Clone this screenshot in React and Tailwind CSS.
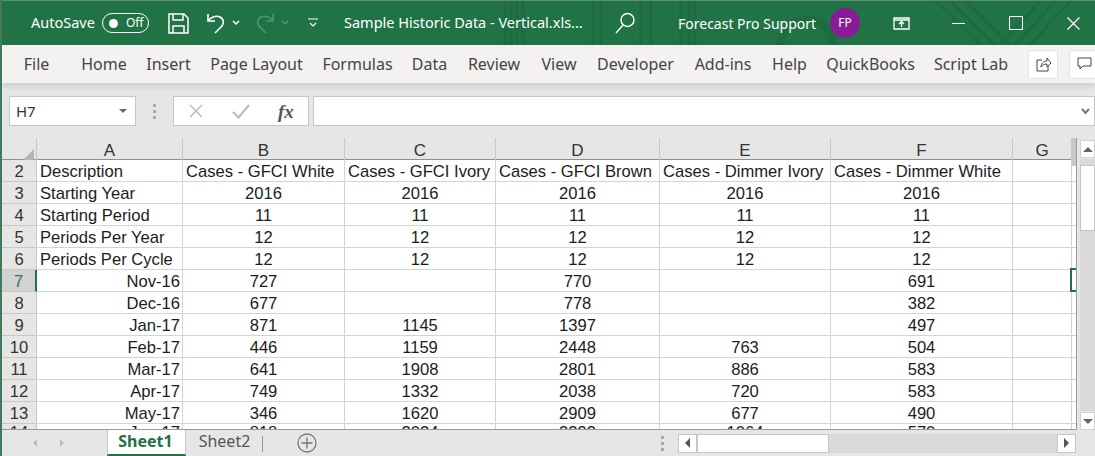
import React from "react";

// ---------- data ----------
const TABS = [
  ["File", "w-[69px]"],
  ["Home", "w-[66px]"],
  ["Insert", "w-[63px]"],
  ["Page Layout", "w-[113px]"],
  ["Formulas", "w-[89px]"],
  ["Data", "w-[55px]"],
  ["Review", "w-[74px]"],
  ["View", "w-[56px]"],
  ["Developer", "w-[97px]"],
  ["Add-ins", "w-[78px]"],
  ["Help", "w-[55px]"],
  ["QuickBooks", "w-[107px]"],
  ["Script Lab", "w-[94px]"],
];

const COLUMNS = ["A", "B", "C", "D", "E", "F", "G"];

const ROWS = [
  [2, "Description", "Cases - GFCI White", "Cases - GFCI Ivory", "Cases - GFCI Brown", "Cases - Dimmer Ivory", "Cases - Dimmer White"],
  [3, "Starting Year", "2016", "2016", "2016", "2016", "2016"],
  [4, "Starting Period", "11", "11", "11", "11", "11"],
  [5, "Periods Per Year", "12", "12", "12", "12", "12"],
  [6, "Periods Per Cycle", "12", "12", "12", "12", "12"],
  [7, "Nov-16", "727", "", "770", "", "691"],
  [8, "Dec-16", "677", "", "778", "", "382"],
  [9, "Jan-17", "871", "1145", "1397", "", "497"],
  [10, "Feb-17", "446", "1159", "2448", "763", "504"],
  [11, "Mar-17", "641", "1908", "2801", "886", "583"],
  [12, "Apr-17", "749", "1332", "2038", "720", "583"],
  [13, "May-17", "346", "1620", "2909", "677", "490"],
  [14, "Jun-17", "818", "2024", "3293", "1064", "570"],
];

const GRID = "grid grid-cols-[35px_146px_162px_151px_164px_171px_182px_59px_4px]";

// ---------- small svg icons ----------
const Stroke = ({ w, h, children, sw = 1.5, className = "" }) => (
  <svg width={w} height={h} viewBox={`0 0 ${w} ${h}`} fill="none" stroke="currentColor" strokeWidth={sw} className={`shrink-0 ${className}`}>
    {children}
  </svg>
);

const Chevron = ({ className = "" }) => (
  <Stroke w={8} h={6} className={className}>
    <path d="M1 1l3 3 3-3" />
  </Stroke>
);

const Grip = () => (
  <div className="flex flex-col justify-center gap-[3px]">
    <span className="w-[3px] h-[3px] bg-[#aaa]" />
    <span className="w-[3px] h-[3px] bg-[#aaa]" />
    <span className="w-[3px] h-[3px] bg-[#aaa]" />
  </div>
);

const TitleBackground = () => (
  <svg className="absolute inset-0 w-full h-full" viewBox="0 0 1095 45" preserveAspectRatio="none">
    <g fill="none" stroke="#1f6b41" strokeWidth="3">
      <path d="M504 0v45M510 0v45M516 0v45M522 0v45" />
      <path d="M592 0v45M600 0v45M640 0v45M650 0v45M680 0v45M688 0v45M694 0v45" />
      <path d="M780 45a26 26 0 0 1 52 0" strokeWidth="8" />
      <path d="M930 -5l50 50M945 -5l50 50M960 -5l50 50M1000 45l45 -50M1015 45l45 -50M1030 45l45 -50" />
    </g>
  </svg>
);

// ---------- sections ----------
const TitleBar = () => (
  <div className="relative shrink-0 h-[45px] bg-[#217346] border-t border-[#5d8f72] text-white overflow-hidden">
    <TitleBackground />
    <div className="relative flex items-center h-full pl-[29px] text-[14.5px]">
      <span className="w-[71px] shrink-0">AutoSave</span>
      <div className="w-[47px] h-[20px] shrink-0 rounded-full border border-white flex items-center pl-[6px] gap-[8px]">
        <span className="w-[9px] h-[9px] rounded-full bg-white" />
        <span className="text-[12px]">Off</span>
      </div>
      <Stroke w={21} h={21} className="ml-[19px]">
        <path d="M1 1h15l4 4v15H1zM5 1v6h10V1M5 20v-7h11v7" />
      </Stroke>
      <Stroke w={20} h={22} sw={1.6} className="ml-[17px]">
        <path d="M2 2v7h7M2 9c3-4 8-6 12-4 5 3 4 8 0 11l-5 5" />
      </Stroke>
      <Chevron className="ml-[6px]" />
      <Stroke w={20} h={22} sw={1.6} className="ml-[15px] text-[#4f9570]">
        <path d="M18 2v7h-7M18 9c-3-4-8-6-12-4-5 3-4 8 0 11l5 5" />
      </Stroke>
      <Chevron className="ml-[6px] text-[#4f9570]" />
      <Stroke w={10} h={10} sw={1.2} className="ml-[19px]">
        <path d="M0 1h10M2 5l3 3 3-3" />
      </Stroke>
      <span className="ml-[26px] w-[271px] shrink-0 whitespace-nowrap">Sample Historic Data - Vertical.xls...</span>
      <Stroke w={20} h={22} sw={1.4}>
        <circle cx="12.5" cy="8" r="6.5" />
        <path d="M8 13l-7 8" />
      </Stroke>
      <span className="ml-[43px] w-[152px] shrink-0 whitespace-nowrap text-[14px]">Forecast Pro Support</span>
      <div className="w-[30px] h-[30px] shrink-0 rounded-full bg-[#8a1a96] flex items-center justify-center text-[12px]">FP</div>
      <Stroke w={17} h={13} sw={1.3} className="ml-[33px]">
        <path d="M1 1h15v11H1zM1 3h15M8.5 10V5M6 7l2.5-2.5L11 7" />
      </Stroke>
      <div className="ml-[42px] w-[13px] h-px shrink-0 bg-white" />
      <div className="ml-[44px] w-[14px] h-[14px] shrink-0 border border-white" />
      <Stroke w={13} h={13} sw={1.2} className="ml-[44px]">
        <path d="M0.5 0.5l12 12M12.5 0.5l-12 12" />
      </Stroke>
    </div>
  </div>
);

const RibbonTabs = () => (
  <div className="relative z-10 shrink-0 flex items-center h-[38px] bg-[#f3f2f1] text-[16px] text-[#444] shadow-[0_3px_6px_rgba(0,0,0,0.12)] overflow-hidden">
    {TABS.map(([label, width]) => (
      <span key={label} className={`${width} shrink-0 text-center whitespace-nowrap`}>
        {label}
      </span>
    ))}
    <div className="ml-[10px] shrink-0 w-[30px] h-[29px] rounded-[2px] bg-white border border-[#e4e4e4] flex items-center justify-center text-[#444]">
      <Stroke w={15} h={15} sw={1}>
        <path d="M6 3H1v11h11V9M5 10c0-4 3-6 6-6V1l4 5-4 4V7c-3 0-5 1-6 3z" />
      </Stroke>
    </div>
    <div className="ml-[11px] shrink-0 w-[30px] h-[29px] rounded-[2px] bg-white border border-[#e4e4e4] flex items-center justify-center text-[#444]">
      <Stroke w={15} h={14} sw={1}>
        <path d="M1 1h13v8H6l-3 3V9H1z" />
      </Stroke>
    </div>
  </div>
);

const FormulaBar = () => (
  <div className="shrink-0 flex items-center h-[55px] bg-[#e6e6e6] pt-[1px] pl-[7px]">
    <div className="w-[127px] h-[30px] bg-white border border-[#c6c6c6] flex items-center justify-between pl-[6px] pr-[8px] text-[#333] text-[15px]">
      <span>H7</span>
      <span className="w-0 h-0 border-x-[4px] border-x-transparent border-t-[4px] border-t-[#666]" />
    </div>
    <div className="ml-[17px]">
      <Grip />
    </div>
    <div className="ml-[17px] w-[136px] h-[30px] bg-white border border-[#c6c6c6] flex items-center pl-[15px] text-[#bdbdbd]">
      <Stroke w={14} h={14} sw={1.6}>
        <path d="M1 1l12 12M13 1L1 13" />
      </Stroke>
      <Stroke w={18} h={15} sw={2.2} className="ml-[29px]">
        <path d="M1 8l5.5 5.5L17 1" />
      </Stroke>
      <span className="ml-[28px] text-[#555] text-[19px] italic font-bold leading-none" style={{ fontFamily: '"Liberation Serif", serif' }}>
        fx
      </span>
    </div>
    <div className="ml-[4px] flex-1 h-[30px] bg-white border border-[#c6c6c6] flex items-center justify-end pr-[4px] text-[#777]">
      <Stroke w={9} h={7} sw={2}>
        <path d="M1 1l3.5 4L8 1" />
      </Stroke>
    </div>
  </div>
);

const Sheet = () => (
  <div className="relative w-[1075px] shrink-0 overflow-hidden border-b border-r border-[#9a9a9a]">
    <div className={`${GRID} h-[22px] border-b border-[#8f8f8f] text-[#333]`}>
      <div className="border-r border-[#c8c8c8] flex items-end justify-end pr-[2px] pb-[3px]">
        <svg width="14" height="14" viewBox="0 0 14 14" className="shrink-0">
          <path d="M14 0v14H0z" fill="#b5b5b5" />
        </svg>
      </div>
      {COLUMNS.map((col) => (
        <div key={col} className="border-r border-[#c8c8c8] flex items-center justify-center text-[17px] pb-[2px]">
          {col}
        </div>
      ))}
      <div className="bg-[#c8c8c8]" />
    </div>
    {ROWS.map(([num, label, ...values]) => {
      // row 14 is cut by the tab bar, only the tops of its text show
      const pad = num === 14 ? "pb-[2px]" : "pt-[3px]";
      return (
        <div key={num} className={`${GRID} h-[22px] bg-white text-[16.6px] text-[#1c1c1c] leading-none`}>
          <div
            className={`flex items-center justify-center ${pad} border-b border-r border-[#c8c8c8] ${
              num === 7 ? "bg-[#d2d2d2] border-r-2 border-r-[#217346] text-[#3f6f55]" : "bg-[#e6e6e6] text-[#333]"
            }`}
          >
            {num}
          </div>
          <div className={`flex items-center ${pad} border-b border-r border-[#d4d4d4] px-[2px] ${num > 6 ? "justify-end" : "pl-[3px]"}`}>
            {label}
          </div>
          {values.map((value, i) => (
            <div
              key={i}
              className={`flex items-center ${pad} whitespace-nowrap border-b border-r border-[#d4d4d4] ${num === 2 ? "pl-[3px]" : "justify-center"}`}
            >
              {value}
            </div>
          ))}
          <div className="border-b border-r border-[#d4d4d4]" />
          <div className="border-b border-[#d4d4d4]" />
        </div>
      );
    })}
    {/* selection edge of H7, mostly scrolled off */}
    <div className="absolute left-[1068px] top-[130px] w-[8px] h-[24px] border-2 border-r-0 border-[#217346]" />
  </div>
);

const VerticalScrollbar = () => (
  <div className="flex-1 bg-[#e6e6e6] pl-[3px] flex flex-col pt-[2px]">
    <div className="h-[18px] shrink-0 bg-white border border-[#d0d0d0] flex items-center justify-center">
      <span className="w-0 h-0 border-x-[5px] border-x-transparent border-b-[5px] border-b-[#666]" />
    </div>
    <div className="relative flex-1 my-[1px] bg-[#d9d9d9]">
      <div className="absolute top-[6px] left-0 right-0 h-[66px] bg-white border border-[#c6c6c6]" />
    </div>
    <div className="h-[18px] shrink-0 bg-white border border-[#d0d0d0] flex items-center justify-center">
      <span className="w-0 h-0 border-x-[5px] border-x-transparent border-t-[5px] border-t-[#666]" />
    </div>
  </div>
);

const SheetTabs = () => (
  <div className="shrink-0 flex items-stretch h-[26px] bg-[#e6e6e6] text-[16px] leading-none">
    <div className="w-[105px] flex items-center pl-[31px] gap-[23px]">
      <span className="w-0 h-0 border-y-[4px] border-y-transparent border-r-[4px] border-r-[#bbb]" />
      <span className="w-0 h-0 border-y-[4px] border-y-transparent border-l-[4px] border-l-[#bbb]" />
    </div>
    <div className="w-[79px] bg-white border-x border-[#c8c8c8] border-b-[2px] border-b-[#217346] flex items-center justify-center pr-[2px] pb-[2px] font-bold text-[#217346]">
      Sheet1
    </div>
    <div className="w-[77px] flex items-center justify-center text-[#555] relative pb-[4px]">
      Sheet2
      <span className="absolute right-0 top-[6px] h-[16px] w-px bg-[#999]" />
    </div>
    <div className="ml-[34px] self-center text-[#777]">
      <Stroke w={20} h={20} sw={1.3}>
        <circle cx="10" cy="10" r="9" />
        <path d="M10 4.5v11M4.5 10h11" />
      </Stroke>
    </div>
    <div className="ml-[344px] flex">
      <Grip />
    </div>
    <div className="ml-[14px] w-[398px] h-[19px] self-center flex bg-[#d9d9d9]">
      <div className="w-[19px] bg-white border border-[#c6c6c6] flex items-center justify-center">
        <span className="w-0 h-0 border-y-[5px] border-y-transparent border-r-[5px] border-r-[#555]" />
      </div>
      <div className="w-[132px] bg-white border border-[#c6c6c6]" />
      <div className="flex-1" />
      <div className="w-[19px] bg-white border border-[#c6c6c6] flex items-center justify-center">
        <span className="w-0 h-0 border-y-[5px] border-y-transparent border-l-[5px] border-l-[#555]" />
      </div>
    </div>
  </div>
);

export default function App() {
  return (
    <div className="w-[1095px] h-[456px] flex flex-col overflow-hidden bg-[#e6e6e6] border-l-2 border-[#3f7a5a]" style={{ fontFamily: '"Noto Sans", sans-serif' }}>
      <TitleBar />
      <RibbonTabs />
      <FormulaBar />
      <div className="flex shrink-0 h-[292px]" style={{ fontFamily: '"Liberation Sans", Arial, sans-serif' }}>
        <Sheet />
        <VerticalScrollbar />
      </div>
      <SheetTabs />
    </div>
  );
}
